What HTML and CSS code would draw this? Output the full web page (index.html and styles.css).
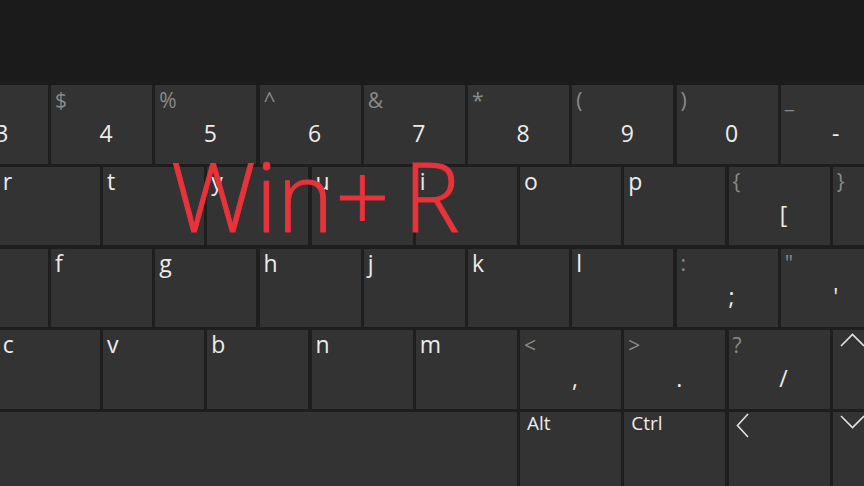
FILE: index.html
```html
<!DOCTYPE html>
<html lang="en">
<head>
<meta charset="utf-8">
<title>Keyboard Win+R</title>
<link rel="stylesheet" href="styles.css">
</head>
<body>
<div class="screen">
  <div class="topbar"></div>
  <div class="keyboard">
    <div class="row row-a">
      <div class="key"><span class="sym">#</span><span class="bot">3</span></div>
      <div class="key"><span class="sym">$</span><span class="bot">4</span></div>
      <div class="key"><span class="sym">%</span><span class="bot">5</span></div>
      <div class="key"><span class="sym">^</span><span class="bot">6</span></div>
      <div class="key"><span class="sym">&amp;</span><span class="bot">7</span></div>
      <div class="key"><span class="sym">*</span><span class="bot">8</span></div>
      <div class="key"><span class="sym">(</span><span class="bot">9</span></div>
      <div class="key"><span class="sym">)</span><span class="bot">0</span></div>
      <div class="key"><span class="sym">_</span><span class="bot">-</span></div>
    </div>
    <div class="row row-b">
      <div class="key"><span class="let">r</span></div>
      <div class="key"><span class="let">t</span></div>
      <div class="key"><span class="let">y</span></div>
      <div class="key"><span class="let">u</span></div>
      <div class="key"><span class="let">i</span></div>
      <div class="key"><span class="let">o</span></div>
      <div class="key"><span class="let">p</span></div>
      <div class="key"><span class="sym">{</span><span class="bot">[</span></div>
      <div class="key"><span class="sym">}</span><span class="bot">]</span></div>
    </div>
    <div class="row row-a">
      <div class="key"><span class="let">d</span></div>
      <div class="key"><span class="let">f</span></div>
      <div class="key"><span class="let">g</span></div>
      <div class="key"><span class="let">h</span></div>
      <div class="key"><span class="let">j</span></div>
      <div class="key"><span class="let">k</span></div>
      <div class="key"><span class="let">l</span></div>
      <div class="key"><span class="sym">:</span><span class="bot">;</span></div>
      <div class="key"><span class="sym">"</span><span class="bot">'</span></div>
    </div>
    <div class="row row-b">
      <div class="key"><span class="let">c</span></div>
      <div class="key"><span class="let">v</span></div>
      <div class="key"><span class="let">b</span></div>
      <div class="key"><span class="let">n</span></div>
      <div class="key"><span class="let">m</span></div>
      <div class="key"><span class="sym">&lt;</span><span class="bot">,</span></div>
      <div class="key"><span class="sym">&gt;</span><span class="bot">.</span></div>
      <div class="key"><span class="sym">?</span><span class="bot">/</span></div>
      <div class="key"><svg class="chev-h" width="25" height="14" viewBox="0 0 25 14"><polyline points="1,13 12.5,1.5 24,13"/></svg></div>
    </div>
    <div class="row row-b">
      <div class="key space"></div>
      <div class="key"><span class="mod">Alt</span></div>
      <div class="key"><span class="mod">Ctrl</span></div>
      <div class="key"><svg class="chev-v" width="13" height="25" viewBox="0 0 13 25"><polyline points="12,1 1.5,12.5 12,24"/></svg></div>
      <div class="key"><svg class="chev-h down" width="25" height="14" viewBox="0 0 25 14"><polyline points="1,1 12.5,12.5 24,1"/></svg></div>
    </div>
  </div>
  <div class="caption">Win<span class="plus">+</span>R</div>
</div>
</body>
</html>
```
FILE: styles.css
```css
html, body {
  margin: 0;
  padding: 0;
  background: #1c1c1c;
  width: 864px;
  height: 486px;
  overflow: hidden;
}

.screen {
  position: relative;
  width: 864px;
  height: 486px;
  overflow: hidden;
  font-family: "Open Sans", "Noto Sans", "Liberation Sans", sans-serif;
}

.topbar {
  height: 85px;
  background: #1b1b1b;
}

.keyboard {
  display: flex;
  flex-direction: column;
  gap: 3.25px;
  background: #1e1e1e;
}

.row {
  display: flex;
  gap: 3.25px;
  height: 78.5px;
}

.row-a { margin-left: -53.25px; }
.row-b { margin-left: -1.25px; }

.key {
  flex: 0 0 101px;
  width: 101px;
  height: 78.5px;
  background: #333333;
  box-sizing: border-box;
  padding: 0 0 0 4px;
  display: flex;
  flex-direction: column;
  color: #ececec;
}

.key.space {
  flex: 0 0 518px;
  width: 518px;
}

.sym {
  display: block;
  font-size: 21px;
  line-height: 21px;
  height: 21px;
  margin-top: 4.5px;
  color: #8a8a8a;
}

.bot {
  display: block;
  font-size: 23px;
  line-height: 23px;
  margin-top: 11px;
  padding-left: 5px;
  text-align: center;
}

.let {
  display: block;
  font-size: 23px;
  line-height: 23px;
  margin-top: 3px;
}

.mod {
  display: block;
  font-size: 19px;
  line-height: 19px;
  margin-top: 2px;
  padding-left: 3px;
}

.key svg polyline {
  fill: none;
  stroke: #e2e2e2;
  stroke-width: 1.6;
}

.chev-h {
  display: block;
  margin: 3px 0 0 3px;
}

.chev-v {
  display: block;
  margin: 1px 0 0 3px;
}

.caption {
  position: absolute;
  left: 171px;
  top: 147.5px;
  font-size: 95px;
  line-height: 95px;
  font-weight: 300;
  color: #e8333b;
  -webkit-text-stroke: 0.9px #e8333b;
  white-space: nowrap;
}

.plus {
  margin: 0 14px 0 2px;
}
```
